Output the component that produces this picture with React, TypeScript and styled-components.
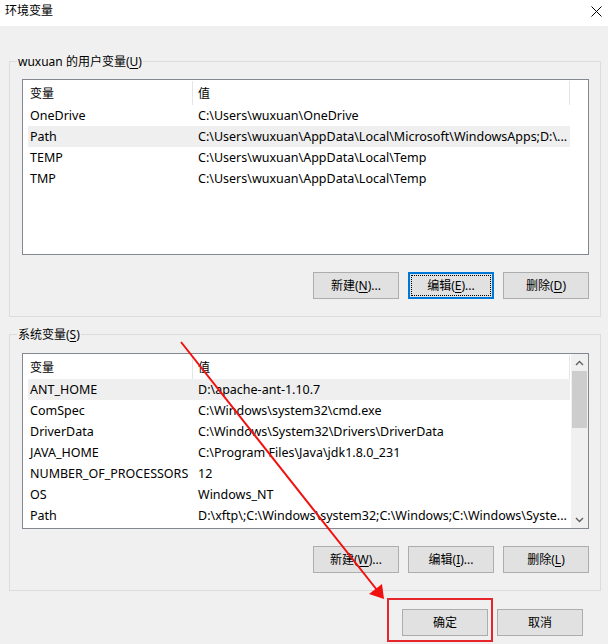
import React from "react";
import styled, { createGlobalStyle } from "styled-components";

const GlobalStyle = createGlobalStyle`
  html, body { margin: 0; padding: 0; background: #f0f0f0; }
  body { font-family: "Noto Sans", "Noto Sans CJK SC", sans-serif; font-size: 12px; color: #000; }
  * { box-sizing: border-box; }
`;

const Window = styled.div`
  position: relative;
  width: 608px;
  height: 644px;
  background: #f0f0f0;
  display: flex;
  flex-direction: column;
  overflow: hidden;
`;

const TitleBar = styled.div`
  height: 26px;
  background: #ffffff;
  display: flex;
  justify-content: space-between;
  align-items: flex-start;
  padding: 3px 6px 0 5px;
`;

const TitleText = styled.div`
  line-height: 16px;
  font-size: 12px;
`;

const CloseIcon = styled.svg`
  margin-top: 3px;
  width: 11px;
  height: 11px;
`;

const Body = styled.div`
  padding: 35px 7px 0 9px;
  display: flex;
  flex-direction: column;
`;

const GroupBox = styled.div<{ $gap?: number }>`
  border: 1px solid #dcdcdc;
  padding: 0 11px 17px 12px;
  display: flex;
  flex-direction: column;
  margin-top: ${(p) => p.$gap ?? 0}px;
`;

const Legend = styled.div`
  align-self: flex-start;
  margin: -8px 0 0 -5px;
  padding: 0 1px;
  background: #f0f0f0;
  line-height: 16px;
  white-space: nowrap;
`;

const ListBox = styled.div<{ $top: number }>`
  margin-top: ${(p) => p.$top}px;
  height: 176px;
  border: 1px solid #828790;
  background: #ffffff;
  display: flex;
  overflow: hidden;
`;

const ListContent = styled.div`
  flex: 1;
  min-width: 0;
  display: flex;
  flex-direction: column;
`;

const HeaderRow = styled.div`
  height: 25px;
  display: grid;
  grid-template-columns: 170px 377px;
  align-items: stretch;
`;

const HeaderCell = styled.div<{ $pad: number }>`
  padding-left: ${(p) => p.$pad}px;
  border-right: 1px solid #e5e5e5;
  display: flex;
  align-items: center;
  margin-top: 1px;
  white-space: nowrap;
`;

const Row = styled.div<{ $selected?: boolean }>`
  height: 21px;
  margin-left: 5px;
  width: 542px;
  display: grid;
  grid-template-columns: 165px 377px;
  align-items: center;
  background: ${(p) => (p.$selected ? "#efefef" : "transparent")};
`;

const Cell = styled.div<{ $pad: number }>`
  padding-left: ${(p) => p.$pad}px;
  white-space: nowrap;
  overflow: hidden;
  line-height: 21px;
  font-size: 12.5px;
`;

const ScrollBar = styled.div`
  width: 17px;
  margin-left: 2px;
  background: #f0f0f0;
  display: flex;
  flex-direction: column;
`;

const ScrollArrow = styled.div`
  height: 17px;
  display: flex;
  align-items: center;
  justify-content: center;
`;

const ScrollTrack = styled.div`
  flex: 1;
  padding: 0 1px;
`;

const ScrollThumb = styled.div`
  height: 57px;
  background: #cdcdcd;
`;

const ButtonRow = styled.div<{ $top: number; $right?: number }>`
  display: flex;
  justify-content: flex-end;
  gap: 9px;
  margin-top: ${(p) => p.$top}px;
  margin-right: ${(p) => p.$right ?? 0}px;
`;

const Button = styled.div<{ $focused?: boolean }>`
  position: relative;
  width: 86px;
  height: 27px;
  background: #e1e1e1;
  border: ${(p) => (p.$focused ? "2px solid #0078d7" : "1px solid #adadad")};
  display: flex;
  align-items: center;
  justify-content: center;
  font-size: 12px;
  white-space: nowrap;
  padding-bottom: 1px;
  &::after {
    content: "";
    display: ${(p) => (p.$focused ? "block" : "none")};
    position: absolute;
    inset: 1px;
    border: 1px dotted #000;
  }
`;

const Acc = styled.span`
  text-decoration: underline;
  text-underline-offset: 2px;
`;

const RedBox = styled.div`
  position: absolute;
  left: 387px;
  top: 598px;
  width: 106px;
  height: 44px;
  border: 2px solid #e5262a;
  pointer-events: none;
`;

const ArrowLayer = styled.svg`
  position: absolute;
  left: 0;
  top: 0;
  width: 608px;
  height: 644px;
  pointer-events: none;
`;

const Chevron = ({ up }: { up?: boolean }) => (
  <svg width="9" height="6" viewBox="0 0 9 6">
    <path
      d={up ? "M1 5 L4.5 1.5 L8 5" : "M1 1 L4.5 4.5 L8 1"}
      fill="none"
      stroke="#606060"
      strokeWidth="1.4"
    />
  </svg>
);

type Item = { name: string; value: string; selected?: boolean };

const userVars: Item[] = [
  { name: "OneDrive", value: "C:\\Users\\wuxuan\\OneDrive" },
  {
    name: "Path",
    value: "C:\\Users\\wuxuan\\AppData\\Local\\Microsoft\\WindowsApps;D:\\...",
    selected: true,
  },
  { name: "TEMP", value: "C:\\Users\\wuxuan\\AppData\\Local\\Temp" },
  { name: "TMP", value: "C:\\Users\\wuxuan\\AppData\\Local\\Temp" },
];

const sysVars: Item[] = [
  { name: "ANT_HOME", value: "D:\\apache-ant-1.10.7", selected: true },
  { name: "ComSpec", value: "C:\\Windows\\system32\\cmd.exe" },
  { name: "DriverData", value: "C:\\Windows\\System32\\Drivers\\DriverData" },
  { name: "JAVA_HOME", value: "C:\\Program Files\\Java\\jdk1.8.0_231" },
  { name: "NUMBER_OF_PROCESSORS", value: "12" },
  { name: "OS", value: "Windows_NT" },
  {
    name: "Path",
    value: "D:\\xftp\\;C:\\Windows\\system32;C:\\Windows;C:\\Windows\\Syste...",
  },
];

const VarList = ({ items, top, scroll }: { items: Item[]; top: number; scroll?: boolean }) => (
  <ListBox $top={top}>
    <ListContent>
      <HeaderRow>
        <HeaderCell $pad={7}>变量</HeaderCell>
        <HeaderCell $pad={5}>值</HeaderCell>
      </HeaderRow>
      {items.map((it) => (
        <Row key={it.name + it.value} $selected={it.selected}>
          <Cell $pad={2}>{it.name}</Cell>
          <Cell $pad={5}>{it.value}</Cell>
        </Row>
      ))}
    </ListContent>
    {scroll && (
      <ScrollBar>
        <ScrollArrow>
          <Chevron up />
        </ScrollArrow>
        <ScrollTrack>
          <ScrollThumb />
        </ScrollTrack>
        <ScrollArrow>
          <Chevron />
        </ScrollArrow>
      </ScrollBar>
    )}
  </ListBox>
);

export default function App() {
  return (
    <>
      <GlobalStyle />
      <Window>
        <TitleBar>
          <TitleText>环境变量</TitleText>
          <CloseIcon viewBox="0 0 11 11">
            <path d="M0.5 0.5 L10.5 10.5 M10.5 0.5 L0.5 10.5" stroke="#000" strokeWidth="1" />
          </CloseIcon>
        </TitleBar>
        <Body>
          <GroupBox>
            <Legend>
              wuxuan 的用户变量(<Acc>U</Acc>)
            </Legend>
            <VarList items={userVars} top={9} />
            <ButtonRow $top={17}>
              <Button>
                新建(<Acc>N</Acc>)...
              </Button>
              <Button $focused>
                编辑(<Acc>E</Acc>)...
              </Button>
              <Button>
                删除(<Acc>D</Acc>)
              </Button>
            </ButtonRow>
          </GroupBox>
          <GroupBox $gap={17}>
            <Legend>
              系统变量(<Acc>S</Acc>)
            </Legend>
            <VarList items={sysVars} top={10} scroll />
            <ButtonRow $top={17}>
              <Button>
                新建(<Acc>W</Acc>)...
              </Button>
              <Button>
                编辑(<Acc>I</Acc>)...
              </Button>
              <Button>
                删除(<Acc>L</Acc>)
              </Button>
            </ButtonRow>
          </GroupBox>
          <ButtonRow $top={18} $right={18}>
            <Button>确定</Button>
            <Button>取消</Button>
          </ButtonRow>
        </Body>
        <RedBox />
        <ArrowLayer viewBox="0 0 608 644">
          <line x1="181" y1="342" x2="377" y2="590" stroke="#f01010" strokeWidth="2" />
          <polygon points="369,594 382,584 384,599" fill="#f01010" />
        </ArrowLayer>
      </Window>
    </>
  );
}
